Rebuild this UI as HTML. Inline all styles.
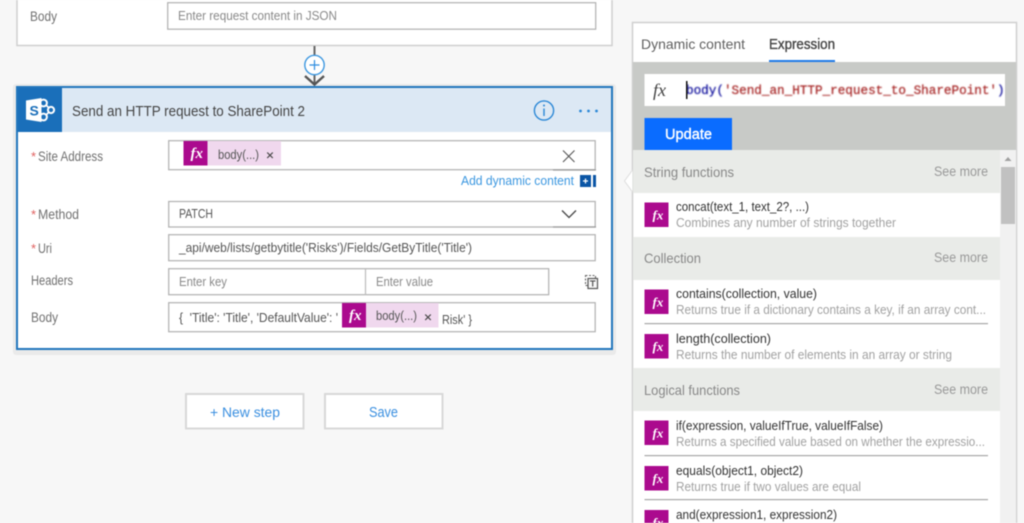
<!DOCTYPE html>
<html lang="en">
<head>
<meta charset="utf-8">
<title>Send an HTTP request to SharePoint</title>
<style>
html,body{margin:0;padding:0;width:1024px;height:523px;overflow:hidden;background:#f7f7f7}
svg{display:block;filter:blur(.4px)}
text{font-family:"Liberation Sans",sans-serif;font-size:13px;fill:#666;white-space:pre}
.lb{font-size:13.5px;fill:#707070}
.ph{fill:#8a8a8a}
.val{fill:#555}
.tk{fill:#555}
.hd{font-size:14px;fill:#888}
.sm{font-size:14px;fill:#999}
.ti{font-size:13px;fill:#333}
.de{font-size:13px;fill:#a2a2a2}
.req{fill:#e0605f}
.fx{font-family:"Liberation Serif",serif;font-style:italic;font-size:15px;fill:#fff;font-weight:bold}
.fs{font-family:"Liberation Serif",serif;font-style:italic;font-size:13px;fill:#fff;font-weight:bold}
.mono{font-family:"Liberation Mono",monospace;font-size:12.65px}
.box{fill:#fff;stroke:#b0b0b0;stroke-width:1.2}
</style>
</head>
<body>
<svg width="1024" height="523" viewBox="0 0 1024 523" xmlns="http://www.w3.org/2000/svg">
<defs>
<g id="fxi"><rect width="24" height="24.5" fill="#ab0a8e"/><text class="fx" x="7" y="17">fx</text></g>
<g id="fxs"><rect width="24" height="24.5" fill="#ab0a8e"/><text class="fs" x="8" y="17">fx</text></g>
</defs>
<rect width="1024" height="523" fill="#f7f7f7"/>

<!-- top card -->
<rect x="17" y="-4" width="595" height="49.5" fill="#fff" stroke="#cfcfcf" stroke-width="1.5"/>
<text class="lb" x="30" y="21" textLength="27" lengthAdjust="spacingAndGlyphs">Body</text>
<rect class="box" x="167.7" y="2.7" width="428" height="26.5"/>
<text class="ph" x="178" y="20" textLength="159" lengthAdjust="spacingAndGlyphs">Enter request content in JSON</text>

<!-- connector -->
<path d="M314.5 46V56" stroke="#666" stroke-width="2"/>
<path d="M314.5 75V84" stroke="#666" stroke-width="2"/>
<path d="M305 76L314.5 84.5L324 76" fill="none" stroke="#555" stroke-width="2.4"/>
<circle cx="314.5" cy="65" r="9.7" fill="#fff" stroke="#3c97e0" stroke-width="1.4"/>
<path d="M309.5 65H319.5M314.5 60V70" stroke="#2f8de0" stroke-width="1.2"/>

<!-- main card -->
<rect x="13" y="84" width="603" height="271" fill="#000" opacity=".05" rx="3"/>
<rect x="17" y="87" width="595" height="262" fill="#fff" stroke="#2176bd" stroke-width="2"/>
<rect x="18" y="88" width="593" height="44" fill="#dce8f4"/>
<rect x="18" y="88" width="44" height="44" fill="#1a6fba"/>
<!-- SharePoint logo -->
<circle cx="43.5" cy="103" r="3.4" fill="none" stroke="#fff" stroke-width="2"/>
<circle cx="51" cy="110" r="3.1" fill="none" stroke="#fff" stroke-width="2"/>
<circle cx="43.5" cy="117" r="3.4" fill="none" stroke="#fff" stroke-width="2"/>
<path d="M46 105L49 108M46 115L49 112" stroke="#fff" stroke-width="1.6"/>
<path d="M26 100.500L41.500 98V122L26 119.500Z" fill="#fff"/>
<text x="29.500" y="115.500" style="font-size:14px;font-weight:bold;fill:#1a6fba">S</text>
<text x="72" y="116" style="font-size:14.5px;fill:#444" textLength="233" lengthAdjust="spacingAndGlyphs">Send an HTTP request to SharePoint 2</text>
<!-- info -->
<circle cx="544" cy="110.5" r="9.6" fill="none" stroke="#2a87d6" stroke-width="1.4"/>
<path d="M544 108.500V116" stroke="#2a87d6" stroke-width="1.4"/>
<circle cx="544" cy="105.500" r="1" fill="#2a87d6"/>
<circle cx="580.500" cy="111" r="1.400" fill="#2a87d6"/><circle cx="588.500" cy="111" r="1.400" fill="#2a87d6"/><circle cx="596.500" cy="111" r="1.400" fill="#2a87d6"/>

<!-- site address -->
<text class="req" x="31" y="161">*</text>
<text class="lb" x="38" y="161" textLength="65" lengthAdjust="spacingAndGlyphs">Site Address</text>
<rect class="box" x="168.700" y="140.700" width="426.500" height="29"/>
<path d="M553 170H596" stroke="#999" stroke-width="1.200"/>
<use href="#fxi" x="183.500" y="141"/>
<rect x="207.500" y="141" width="73.500" height="24.500" fill="#f0d8ee"/>
<text class="tk" x="218" y="159" textLength="41" lengthAdjust="spacingAndGlyphs">body(...)</text>
<path d="M267.200 152.500L272.800 158M272.800 152.500L267.200 158" stroke="#444" stroke-width="1.200"/>
<path d="M563 150.500L574.500 162M574.500 150.500L563 162" stroke="#555" stroke-width="1.100"/>
<text x="461" y="185" style="font-size:13px;fill:#3b97e0" textLength="113" lengthAdjust="spacingAndGlyphs">Add dynamic content</text>
<rect x="580" y="175" width="11" height="12" fill="#0a55a5"/>
<rect x="593" y="175" width="3" height="12" fill="#0a55a5"/>
<path d="M583 181H588M585.500 178.500V183.500" stroke="#fff" stroke-width="1.200"/>

<!-- method -->
<text class="req" x="31" y="219">*</text>
<text class="lb" x="38" y="219" textLength="41" lengthAdjust="spacingAndGlyphs">Method</text>
<rect class="box" x="168.700" y="201.500" width="426.500" height="25.500"/>
<path d="M553 227H596" stroke="#999" stroke-width="1.200"/>
<text class="val" x="179" y="218" textLength="34" lengthAdjust="spacingAndGlyphs">PATCH</text>
<path d="M562 210.500L569 217.500L576 210.500" fill="none" stroke="#444" stroke-width="1.300"/>

<!-- uri -->
<text class="req" x="31" y="253">*</text>
<text class="lb" x="38" y="253" textLength="14" lengthAdjust="spacingAndGlyphs">Uri</text>
<rect class="box" x="168.700" y="234.700" width="426.500" height="26"/>
<text class="val" x="179" y="252" textLength="293" lengthAdjust="spacingAndGlyphs">_api/web/lists/getbytitle('Risks')/Fields/GetByTitle('Title')</text>

<!-- headers -->
<text class="lb" x="31" y="285" textLength="42" lengthAdjust="spacingAndGlyphs">Headers</text>
<rect class="box" x="168.700" y="268.700" width="380" height="26"/>
<path d="M365.500 269V295" stroke="#bbb" stroke-width="1.200"/>
<text class="ph" x="179" y="286" textLength="48" lengthAdjust="spacingAndGlyphs">Enter key</text>
<text class="ph" x="376" y="286" textLength="57" lengthAdjust="spacingAndGlyphs">Enter value</text>
<rect x="585.500" y="275.500" width="10" height="10" fill="none" stroke="#666" stroke-width="1.100" stroke-dasharray="2 1.500"/>
<rect x="588" y="278.500" width="9.500" height="10" fill="#f7f7f7" stroke="#555" stroke-width="1.200"/>
<path d="M590 281H595.500M592.700 281V286.500" stroke="#444" stroke-width="1.100"/>

<!-- body -->
<text class="lb" x="31" y="322" textLength="27" lengthAdjust="spacingAndGlyphs">Body</text>
<rect class="box" x="168.700" y="302.700" width="426.500" height="29"/>
<text class="val" x="179" y="322" textLength="159" lengthAdjust="spacingAndGlyphs">{  'Title': 'Title', 'DefaultValue': '</text>
<use href="#fxi" x="342" y="303"/>
<rect x="366" y="303" width="72.500" height="24.500" fill="#f0d8ee"/>
<text class="tk" x="376" y="320" textLength="41" lengthAdjust="spacingAndGlyphs">body(...)</text>
<path d="M425.200 314.500L430.800 320M430.800 314.500L425.200 320" stroke="#444" stroke-width="1.200"/>
<text class="val" x="442" y="324" textLength="30" lengthAdjust="spacingAndGlyphs">Risk' }</text>

<!-- buttons -->
<rect x="186" y="394" width="117.500" height="34.500" fill="#fff" stroke="#d8d8d8" stroke-width="2"/>
<text x="210" y="417" style="font-size:14px;fill:#3a8fe0" textLength="70" lengthAdjust="spacingAndGlyphs">+ New step</text>
<rect x="325" y="394" width="117.500" height="34.500" fill="#fff" stroke="#d8d8d8" stroke-width="2"/>
<text x="369" y="417" style="font-size:14.500px;fill:#3a8fe0" textLength="29" lengthAdjust="spacingAndGlyphs">Save</text>

<!-- panel -->
<rect x="632.500" y="22.500" width="384" height="510" fill="#fff" stroke="#d0d0d0" stroke-width="1.500"/>
<path d="M632.500 170L624.500 181L632.500 192" fill="#fff" stroke="#dddddd"/>
<text x="641" y="49" style="font-size:14px;fill:#606060" textLength="104" lengthAdjust="spacingAndGlyphs">Dynamic content</text>
<text x="769" y="49" style="font-size:14.500px;fill:#444;stroke:#444;stroke-width:.35" textLength="66" lengthAdjust="spacingAndGlyphs">Expression</text>
<rect x="633" y="62" width="383" height="88" fill="#c8cac7"/>
<rect x="769" y="60" width="66" height="2" fill="#1f7ae8"/>
<rect x="644.500" y="74" width="360.500" height="32" fill="#fff"/>
<text x="653" y="96" style="font-family:'Liberation Serif',serif;font-style:italic;font-size:18px;fill:#444">fx</text>
<svg x="644" y="74" width="361" height="32" viewBox="644 74 361 32">
<text class="mono" x="686" y="94" style="fill:#0a0a9a;stroke:#0a0a9a;stroke-width:.2">body(<tspan style="fill:#a52020;stroke:#a52020">'Send_an_HTTP_request_to_SharePoint'</tspan>)</text>
</svg>
<rect x="686" y="81" width="1.500" height="18" fill="#111"/>
<rect x="644.500" y="118" width="87.500" height="32" fill="#0a6cff"/>
<text x="665" y="139" style="font-size:15px;fill:#fff;stroke:#fff;stroke-width:.4" textLength="47" lengthAdjust="spacingAndGlyphs">Update</text>

<!-- scrollbar -->
<rect x="1000" y="150" width="16" height="373" fill="#f1f1f1"/>
<path d="M1004.500 161L1008 157L1011.500 161Z" fill="#a0a0a0"/>
<rect x="1001" y="167" width="14" height="57" fill="#c1c1c1"/>

<!-- sections -->
<rect x="633" y="150" width="367" height="43" fill="#e9ebe8"/>
<text class="hd" x="644" y="177" textLength="90" lengthAdjust="spacingAndGlyphs">String functions</text>
<text class="sm" x="934" y="176" textLength="54" lengthAdjust="spacingAndGlyphs">See more</text>

<use href="#fxs" x="644.500" y="202.500"/>
<text class="ti" x="676" y="211" textLength="133" lengthAdjust="spacingAndGlyphs">concat(text_1, text_2?, ...)</text>
<text class="de" x="676" y="227" textLength="220" lengthAdjust="spacingAndGlyphs">Combines any number of strings together</text>

<rect x="633" y="237" width="367" height="43" fill="#e9ebe8"/>
<text class="hd" x="644" y="263" textLength="57" lengthAdjust="spacingAndGlyphs">Collection</text>
<text class="sm" x="934" y="262" textLength="54" lengthAdjust="spacingAndGlyphs">See more</text>

<use href="#fxs" x="644.500" y="289.500"/>
<text class="ti" x="676" y="298" textLength="141" lengthAdjust="spacingAndGlyphs">contains(collection, value)</text>
<text class="de" x="676" y="314" textLength="310" lengthAdjust="spacingAndGlyphs">Returns true if a dictionary contains a key, if an array cont...</text>
<rect x="644.500" y="323" width="343.500" height="1.200" fill="#a8a8a8"/>

<use href="#fxs" x="644.500" y="334"/>
<text class="ti" x="676" y="343" textLength="95" lengthAdjust="spacingAndGlyphs">length(collection)</text>
<text class="de" x="676" y="359" textLength="276" lengthAdjust="spacingAndGlyphs">Returns the number of elements in an array or string</text>

<rect x="633" y="368" width="367" height="43" fill="#e9ebe8"/>
<text class="hd" x="644" y="395" textLength="96" lengthAdjust="spacingAndGlyphs">Logical functions</text>
<text class="sm" x="934" y="394" textLength="54" lengthAdjust="spacingAndGlyphs">See more</text>

<use href="#fxs" x="644.500" y="420.500"/>
<text class="ti" x="676" y="430" textLength="207" lengthAdjust="spacingAndGlyphs">if(expression, valueIfTrue, valueIfFalse)</text>
<text class="de" x="676" y="446" textLength="309" lengthAdjust="spacingAndGlyphs">Returns a specified value based on whether the expressio...</text>
<rect x="644.500" y="455" width="343.500" height="1.200" fill="#a8a8a8"/>

<use href="#fxs" x="644.500" y="466"/>
<text class="ti" x="676" y="475" textLength="127" lengthAdjust="spacingAndGlyphs">equals(object1, object2)</text>
<text class="de" x="676" y="491" textLength="185" lengthAdjust="spacingAndGlyphs">Returns true if two values are equal</text>
<rect x="644.500" y="499" width="343.500" height="1.200" fill="#a8a8a8"/>

<use href="#fxs" x="644.500" y="510"/>
<text class="ti" x="676" y="519" textLength="161" lengthAdjust="spacingAndGlyphs">and(expression1, expression2)</text>
</svg>
</body>
</html>
